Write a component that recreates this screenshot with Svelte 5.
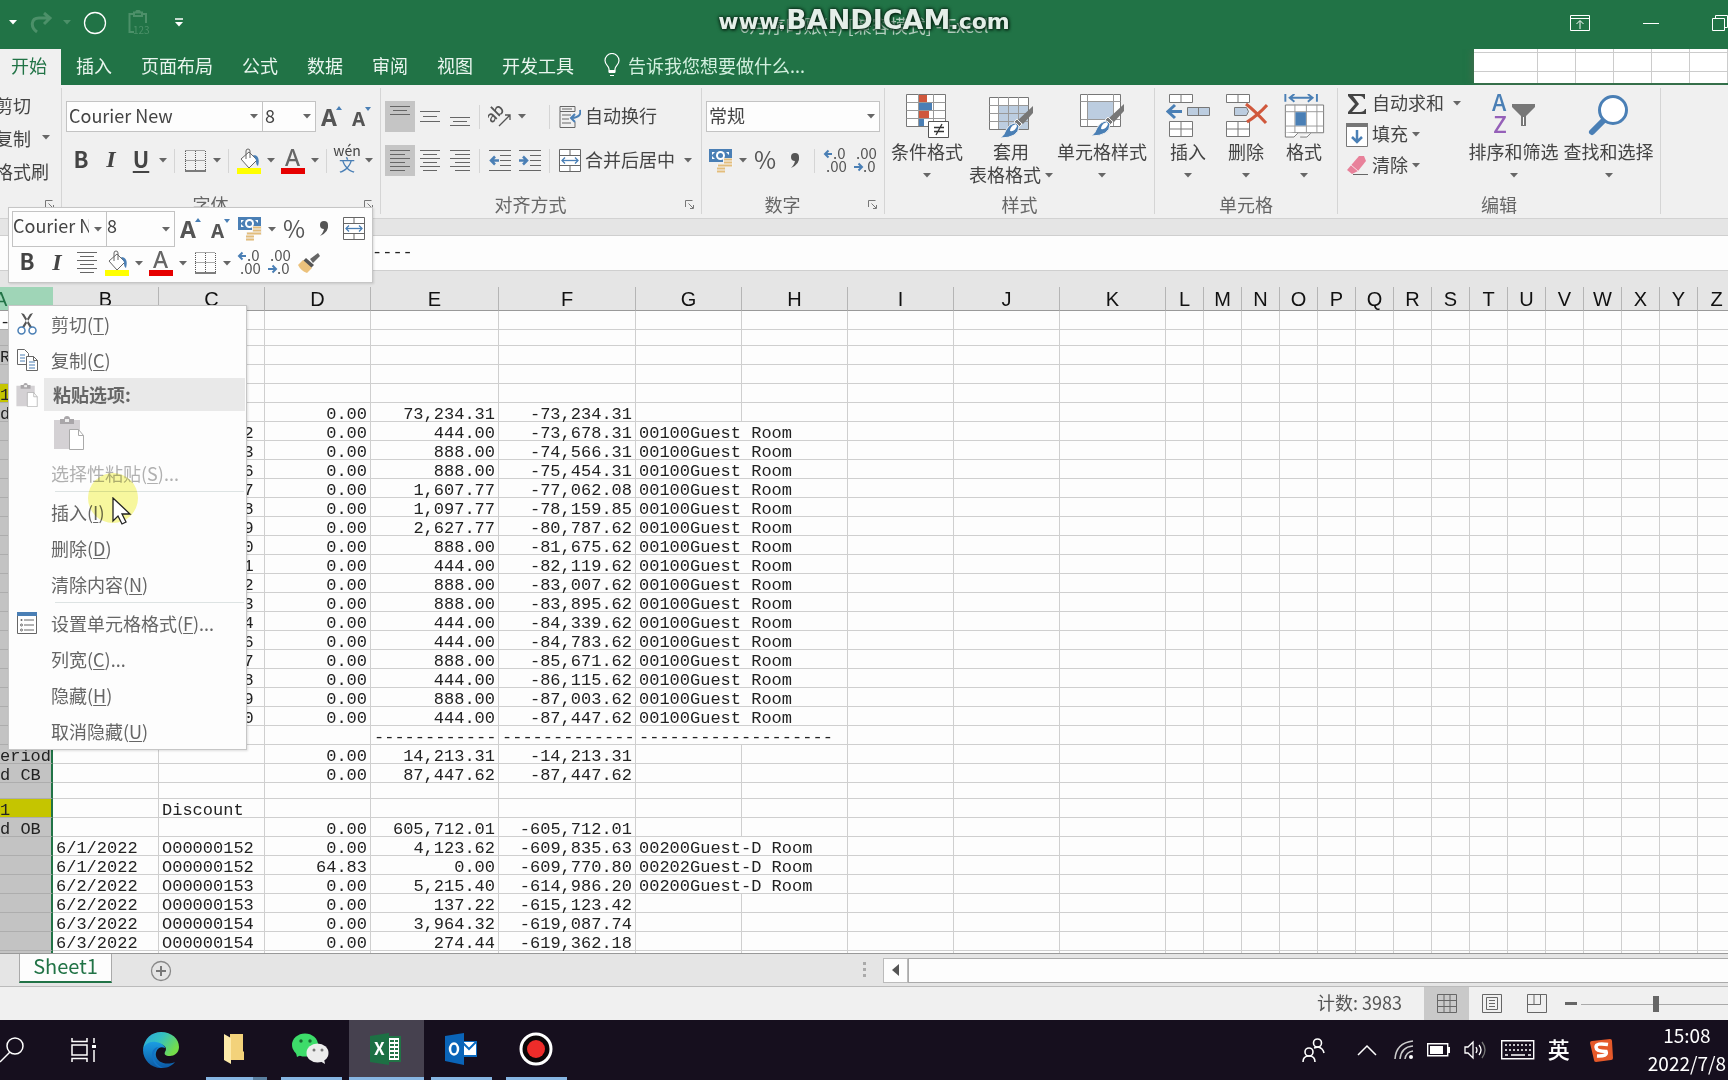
<script>
  const tabs = ['开始', '插入', '页面布局', '公式', '数据', '审阅', '视图', '开发工具'];

  const columns = [
    ['A', 53], ['B', 106], ['C', 106], ['D', 106], ['E', 128], ['F', 137], ['G', 106], ['H', 106],
    ['I', 106], ['J', 106], ['K', 106],
    ...'LMNOPQRSTUVWXYZ'.split('').map((l) => [l, 38])
  ];
  const restCount = columns.length - 8;

  const room = '00100Guest Room';
  const blank = (a = '', extra = {}) => ({ a, b: '', c: '', d: '', e: '', f: '', g: '', ...extra });
  const line = (c, e, f) => ({ a: '', b: '', c: 'O00000' + c, d: '0.00', e, f, g: room });
  const rows = [
    blank('-', { active: true }),
    blank('', { short: true }),
    blank('R'),
    blank(),
    blank('1', { mark: true }),
    { a: 'd', b: '', c: '', d: '0.00', e: '73,234.31', f: '-73,234.31', g: '' },
    line(152, '444.00', '-73,678.31'),
    line(153, '888.00', '-74,566.31'),
    line(156, '888.00', '-75,454.31'),
    line(157, '1,607.77', '-77,062.08'),
    line(158, '1,097.77', '-78,159.85'),
    line(159, '2,627.77', '-80,787.62'),
    line(160, '888.00', '-81,675.62'),
    line(161, '444.00', '-82,119.62'),
    line(162, '888.00', '-83,007.62'),
    line(163, '888.00', '-83,895.62'),
    line(164, '444.00', '-84,339.62'),
    line(166, '444.00', '-84,783.62'),
    line(167, '888.00', '-85,671.62'),
    line(168, '444.00', '-86,115.62'),
    line(169, '888.00', '-87,003.62'),
    line(170, '444.00', '-87,447.62'),
    { a: '', b: '', c: '', d: '', e: '-------------', f: '--------------', g: '-------------------', rule: true },
    { a: 'eriod', b: '', c: '', d: '0.00', e: '14,213.31', f: '-14,213.31', g: '' },
    { a: 'd CB', b: '', c: '', d: '0.00', e: '87,447.62', f: '-87,447.62', g: '' },
    blank('', { short: true }),
    blank('1', { mark: true, c: 'Discount' }),
    { a: 'd OB', b: '', c: '', d: '0.00', e: '605,712.01', f: '-605,712.01', g: '' },
    { a: '', b: '6/1/2022', c: 'O00000152', d: '0.00', e: '4,123.62', f: '-609,835.63', g: '00200Guest-D Room' },
    { a: '', b: '6/1/2022', c: 'O00000152', d: '64.83', e: '0.00', f: '-609,770.80', g: '00202Guest-D Room' },
    { a: '', b: '6/2/2022', c: 'O00000153', d: '0.00', e: '5,215.40', f: '-614,986.20', g: '00200Guest-D Room' },
    { a: '', b: '6/2/2022', c: 'O00000153', d: '0.00', e: '137.22', f: '-615,123.42', g: '' },
    { a: '', b: '6/3/2022', c: 'O00000154', d: '0.00', e: '3,964.32', f: '-619,087.74', g: '' },
    { a: '', b: '6/3/2022', c: 'O00000154', d: '0.00', e: '274.44', f: '-619,362.18', g: '' },
    blank(), blank(), blank(), blank()
  ];

  const menuTop = [
    { icon: 'cut', text: '剪切', key: 'T' },
    { icon: 'copy', text: '复制', key: 'C' }
  ];
  const menuEdit = [
    { text: '插入', key: 'I' },
    { text: '删除', key: 'D' },
    { text: '清除内容', key: 'N' }
  ];
  const menuFormat = [
    { icon: 'format', text: '设置单元格格式', key: 'F', more: '...' },
    { text: '列宽', key: 'C', more: '...' },
    { text: '隐藏', key: 'H' },
    { text: '取消隐藏', key: 'U' }
  ];
  let zoom = $state(50);
</script>

{#snippet caret()}
  <svg class="caret" width="8" height="5" viewBox="0 0 8 5" aria-hidden="true"><path d="M0 0h8L4 4.500z" fill="currentColor" /></svg>
{/snippet}

{#snippet drop(label)}
  <button class="drop" aria-label={label}>{@render caret()}</button>
{/snippet}

{#snippet sep()}<span class="sep"></span>{/snippet}

{#snippet lines(ys, center, right)}
  <svg width="20" height="24" viewBox="0 0 20 24" aria-hidden="true">
    {#each ys as y, i}
      <path d={i % 2 === 0 ? `M0 ${y}h20` : center ? `M3 ${y}h14` : right ? `M5 ${y}h15` : `M0 ${y}h15`} stroke="#666" fill="none" />
    {/each}
  </svg>
{/snippet}

{#snippet grow(down)}
  <svg width="24" height="26" viewBox="0 0 24 26" aria-hidden="true">
    {#if down}
      <text x="3" y="22" class="glyph" font-size="19">A</text><path d="M16 3h6l-3 4z" fill="#4a7fb5" />
    {:else}
      <text x="2" y="22" class="glyph" font-size="23">A</text><path d="M17 6h6l-3-4z" fill="#4a7fb5" />
    {/if}
  </svg>
{/snippet}

{#snippet bucket()}
  <svg width="26" height="26" viewBox="0 0 26 26" aria-hidden="true">
    <path d="M5 11L13 4l8 8-8 8z" fill="#fff" stroke="#666" /><path d="M10 11V3q0-2 2-2t2 2v7" fill="none" stroke="#666" />
    <path d="M17 7c5 0 7 4 5 11-2-1-2-4-2-6z" fill="#4a7fb5" /><rect x="1" y="20" width="24" height="6" fill="#ff0" />
  </svg>
{/snippet}

{#snippet fontColor()}
  <svg width="26" height="26" viewBox="0 0 26 26" aria-hidden="true">
    <text x="5" y="18" class="glyph mid" font-size="23">A</text><rect x="1" y="20" width="24" height="6" fill="#e60000" />
  </svg>
{/snippet}

{#snippet border()}
  <svg width="21" height="22" viewBox="0 0 21 22" aria-hidden="true">
    <path d="M.5.500h20M.5 10.500h20M.5 1v20M10.500 1v20M20.500 1v20" stroke="#555" stroke-dasharray="1 1" /><path d="M0 21h21" stroke="#555" stroke-width="1.500" />
  </svg>
{/snippet}

{#snippet money()}
  <svg width="24" height="24" viewBox="0 0 24 24" aria-hidden="true">
    <path d="M0 0h23v13H0z" fill="#4a7fb5" /><path d="M3 3h3L3 6zM20 3h-3l3 3zM3 10h3L3 7z" fill="#fff" /><circle cx="11.500" cy="6.500" r="4.500" fill="#fff" /><circle cx="11.500" cy="6.500" r="2.500" fill="#4a7fb5" />
    <path d="M14 9h10v9h-9v6H8v-9h6z" fill="#f4f4f4" />
    <path d="M15 10.500h8M15 13.500h8M15 16.500h8M9 16.500h6M8 19.500h8M8 22.500h8" stroke="#e3bd7c" stroke-width="2" fill="none" />
  </svg>
{/snippet}

{#snippet merge()}
  <svg width="22" height="24" viewBox="0 0 22 24" aria-hidden="true">
    <path d="M.5.500h21v22H.5zM.5 6.500h21M.5 16.500h21M11 1v5M11 17v5" fill="#fff" stroke="#666" />
    <path d="M3 11.500h16" stroke="#4a7fb5" stroke-width="1.300" /><path d="M6 8.500l-3 3 3 3M16 8.500l3 3-3 3" fill="none" stroke="#4a7fb5" stroke-width="1.300" />
  </svg>
{/snippet}

{#snippet decimal(more)}
  <svg width="24" height="26" viewBox="0 0 24 26" aria-hidden="true">
    {#if more}
      <text x="10" y="11" class="num">.0</text><text x="3" y="24" class="num">.00</text>
      <path d="M9 6H2M5.500 2.500L2 6l3.500 3.500" stroke="#4a7fb5" stroke-width="2" fill="none" />
    {:else}
      <text x="3" y="11" class="num">.00</text><text x="10" y="24" class="num">.0</text>
      <path d="M1 19h7M5.500 15.500L9 19l-3.500 3.500" stroke="#4a7fb5" stroke-width="2" fill="none" />
    {/if}
  </svg>
{/snippet}

{#snippet comma()}
  <svg width="12" height="18" viewBox="0 0 12 18" aria-hidden="true"><circle cx="6" cy="5" r="4" fill="#555" /><path d="M6 5h4q1 7-8 11 4-4 4-8z" fill="#555" /></svg>
{/snippet}

{#snippet brush()}
  <path d="M45 12v7l-10 11-5-4z" fill="#777" /><path d="M34 30l-5-5-3 3 5 5z" fill="#777" stroke="#f0f0f0" />
  <path d="M31 32q0 12-19 12 4-2 6-8 4-7 10-7z" fill="#4a7fb5" stroke="#f0f0f0" /><path d="M29 32q-2 6-7 5 0-5 6-7z" fill="#fff" />
{/snippet}

{#snippet paste(size)}
  <svg width={size} height={size} viewBox="0 0 32 34" aria-hidden="true">
    <path d="M1 4h26v10h-4v19H1z" fill="#d4d1d4" /><path d="M7 8V3h4q0-3 3-3t3 3h4v5z" fill="#a9a6a9" /><rect x="12" y="3" width="4" height="3" fill="#eee" />
    <path d="M16.500 13.500h9l5 6v14h-14z" fill="#fff" stroke="#aaa" /><path d="M25.500 13.500v6h5" fill="none" stroke="#aaa" />
  </svg>
{/snippet}

{#snippet launcher(label)}
  <button class="launcher" aria-label={label}>
    <svg width="10" height="10" viewBox="0 0 10 10" aria-hidden="true"><path d="M.5 7V.500h7M3.500 3.500L8 8M8.500 5v3.500H5" fill="none" stroke="#777" /></svg>
  </button>
{/snippet}

{#snippet foot(label)}
  <div class="foot"><span>{label}</span>{@render launcher(label + '设置')}</div>
{/snippet}

{#snippet menuItem(item)}
  <li role="none">
    <button class="item" role="menuitem">
      <span class="mi">
        {#if item.icon === 'cut'}
          <svg width="20" height="22" viewBox="0 0 20 22"><path d="M4 0l3 1 8 13-2 1zM16 0l-3 1-8 13 2 1z" fill="#555" /><circle cx="4.500" cy="17.500" r="3.500" fill="#fff" stroke="#4a7fb5" stroke-width="1.500" /><circle cx="15.500" cy="17.500" r="3.500" fill="#fff" stroke="#4a7fb5" stroke-width="1.500" /></svg>
        {:else if item.icon === 'copy'}
          <svg width="21" height="22" viewBox="0 0 21 22"><path d="M.5.500h7l4 4v11H.5z" fill="#fff" stroke="#666" /><path d="M3 6h5M3 9h5M3 12h5" stroke="#4a7fb5" /><path d="M9.500 7.500h7l4 4v10h-11z" fill="#fff" stroke="#666" /><path d="M16.500 7.500v4h4" fill="none" stroke="#666" /><path d="M12 13h6M12 16h6M12 19h6" stroke="#4a7fb5" /></svg>
        {:else if item.icon === 'format'}
          <svg width="20" height="22" viewBox="0 0 20 22"><path d="M.5.500h19v21H.5z" fill="#fff" stroke="#666" /><path d="M0 0h20v4H0z" fill="#4a7fb5" /><path d="M7 8h10M7 13h10M7 18h10" stroke="#666" /><circle cx="4.500" cy="8" r="1" fill="#666" /><circle cx="4.500" cy="13" r="1" fill="none" stroke="#666" /><circle cx="4.500" cy="18" r="1" fill="none" stroke="#666" /></svg>
        {/if}
      </span>
      <span>{item.text}(<u>{item.key}</u>){item.more ?? ''}</span>
    </button>
  </li>
{/snippet}

<div class="app">
  <header class="titlebar">
    <div class="quick">
      <button class="drop" aria-label="撤消">{@render caret()}</button>
      <button class="dim redo" aria-label="恢复"><svg width="24" height="22" viewBox="0 0 24 22"><path d="M7 20C0 15 1 6 9 6h9M14 1l6 5-6 6" fill="none" stroke="currentColor" stroke-width="3" /></svg></button>
      <button class="drop dim" aria-label="恢复列表">{@render caret()}</button>
      <button class="circle" aria-label="圆形"><svg width="24" height="24" viewBox="0 0 24 24"><circle cx="12" cy="12" r="10.500" fill="none" stroke="#fff" stroke-width="1.300" /></svg></button>
      <button class="dim pastenum" aria-label="粘贴数值"><svg width="24" height="25" viewBox="0 0 24 25"><path d="M7 22H2.500V4H7M15 4h4v9M7 2.500h8V6H7zM9 2q2-3 4 0" fill="none" stroke="currentColor" stroke-width="2" /><text x="6" y="24" font-size="10" fill="currentColor">123</text></svg></button>
      <button class="custom" aria-label="自定义快速访问工具栏"><svg width="8" height="9" viewBox="0 0 8 9"><path d="M0 1h8" stroke="#fff" stroke-width="1.500" /><path d="M0 4h8L4 8.500z" fill="#fff" /></svg></button>
    </div>
    <h1>6月序时账(1) [兼容模式] - Excel</h1>
    <div class="winctl">
      <button aria-label="功能区显示选项"><svg width="20" height="16" viewBox="0 0 20 16"><path d="M.5.500h19v15H.5zM.5 3.500h19M10 14V6M6.500 9L10 5.500 13.500 9" fill="none" stroke="#fff" /></svg></button>
      <button aria-label="最小化"><svg width="16" height="16" viewBox="0 0 16 16"><path d="M0 8.500h16" stroke="#fff" /></svg></button>
      <button aria-label="还原"><svg width="16" height="16" viewBox="0 0 16 16"><path d="M.5 3.500h12v12H.5zM3.500 3V.500h12v12H13" fill="none" stroke="#fff" /></svg></button>
    </div>
    <div class="watermark"><small>www.</small>BANDICAM<small>.com</small></div>
  </header>

  <nav class="tabs">
    {#each tabs as tab, i}
      <button class="tab" class:on={i === 0}>{tab}</button>
    {/each}
    <button class="tell">
      <svg width="16" height="24" viewBox="0 0 16 24"><path d="M5 19v-3C5 13 1 12 1 7.500a7 7 0 0 1 14 0C15 12 11 13 11 16v3z" fill="none" stroke="#fff" stroke-width="1.200" /><path d="M5 17h6v3H5zM6 22h4v1H6z" fill="#fff" /></svg>
      告诉我您想要做什么...
    </button>
    <div class="ghost"></div>
  </nav>

  <section class="ribbon">
    <div class="group clip">
      <div class="stack">
        <button class="tool">剪切</button>
        <div class="pair"><button class="tool">复制</button>{@render drop('复制选项')}</div>
        <button class="tool">格式刷</button>
      </div>
      <div class="foot"><span></span>{@render launcher('剪贴板设置')}</div>
    </div>

    <div class="group font">
      <div class="line">
        <label class="combo face"><select aria-label="字体"><option>Courier New</option></select>{@render caret()}</label>
        <label class="combo size"><select aria-label="字号"><option>8</option></select>{@render caret()}</label>
        <button class="btn" aria-label="增大字号">{@render grow(false)}</button>
        <button class="btn" aria-label="减小字号">{@render grow(true)}</button>
      </div>
      <div class="line">
        <button class="btn b">B</button><button class="btn i">I</button><button class="btn u">U</button>{@render drop('下划线')}
        {@render sep()}
        <button class="btn" aria-label="边框">{@render border()}</button>{@render drop('边框选项')}
        {@render sep()}
        <button class="btn" aria-label="填充颜色">{@render bucket()}</button>{@render drop('填充颜色选项')}
        <button class="btn" aria-label="字体颜色">{@render fontColor()}</button>{@render drop('字体颜色选项')}
        {@render sep()}
        <button class="btn wen"><span>wén</span><span>文</span></button>{@render drop('拼音选项')}
      </div>
      {@render foot('字体')}
    </div>

    <div class="group align">
      <div class="line">
        <button class="btn on" aria-label="顶端对齐">{@render lines([1.5, 5.5, 9.5], true)}</button>
        <button class="btn" aria-label="垂直居中">{@render lines([6.5, 11.5, 16.5], true)}</button>
        <button class="btn" aria-label="底端对齐">{@render lines([12.5, 16.5, 20.5], true)}</button>
        {@render sep()}
        <div class="orient">
          <button class="btn" aria-label="方向"><svg width="24" height="24" viewBox="0 0 24 24"><text x="0" y="14" font-size="16" font-weight="500" fill="#555" transform="rotate(-45 8 12)">ab</text><path d="M11 21L22 10M17 10h5v5" fill="none" stroke="#555" stroke-width="1.300" /></svg></button>{@render drop('方向选项')}
        </div>
        {@render sep()}
        <button class="tool wide"><svg width="22" height="24" viewBox="0 0 22 24"><path d="M1 1.500h15v5H1zM1 22.500v-16M16 17v5.500H1M3 4h10M3 10h9M3 14h7M3 18h9" fill="none" stroke="#666" /><path d="M21 5q2 7-8 8M16 9l-4 4 4 4" fill="none" stroke="#4a7fb5" stroke-width="2" /></svg><span>自动换行</span></button>
      </div>
      <div class="line">
        <button class="btn on" aria-label="左对齐">{@render lines([1.5, 5.5, 9.5, 13.5, 17.5, 21.5])}</button>
        <button class="btn" aria-label="居中">{@render lines([1.5, 5.5, 9.5, 13.5, 17.5, 21.5], true)}</button>
        <button class="btn" aria-label="右对齐">{@render lines([1.5, 5.5, 9.5, 13.5, 17.5, 21.5], false, true)}</button>
        {@render sep()}
        <div class="orient">
          <button class="btn" aria-label="减少缩进量"><svg width="22" height="24" viewBox="0 0 22 24"><path d="M0 1.500h22M11 6.500h11M11 11.500h11M11 16.500h11M0 21.500h22" stroke="#666" /><path d="M10 11.500H2M6 7.500l-4 4 4 4" fill="none" stroke="#4a7fb5" stroke-width="2.500" /></svg></button>
          <button class="btn" aria-label="增加缩进量"><svg width="22" height="24" viewBox="0 0 22 24"><path d="M0 1.500h22M11 6.500h11M11 11.500h11M11 16.500h11M0 21.500h22" stroke="#666" /><path d="M0 11.500h8M4 7.500l4 4-4 4" fill="none" stroke="#4a7fb5" stroke-width="2.500" /></svg></button>
        </div>
        {@render sep()}
        <button class="tool wide">{@render merge()}<span>合并后居中</span></button>{@render drop('合并选项')}
      </div>
      {@render foot('对齐方式')}
    </div>

    <div class="group number">
      <div class="line">
        <label class="combo fmt"><select aria-label="数字格式"><option>常规</option></select>{@render caret()}</label>
      </div>
      <div class="line">
        <button class="btn" aria-label="会计数字格式">{@render money()}</button>{@render drop('会计格式选项')}
        <button class="btn pct">%</button>
        <button class="btn" aria-label="千位分隔样式">{@render comma()}</button>
        {@render sep()}
        <button class="btn" aria-label="增加小数位数">{@render decimal(true)}</button>
        <button class="btn" aria-label="减少小数位数">{@render decimal(false)}</button>
      </div>
      {@render foot('数字')}
    </div>

    <div class="group styles">
      <div class="bigs">
        <button class="big">
          <svg width="44" height="44" viewBox="0 0 44 44"><path d="M1.500.500h39v32h-39z" fill="#fff" stroke="#777" /><path d="M1.500 8.500h39M1.500 16.500h39M1.500 24.500h39M13.500 0v32M28.500 0v32" stroke="#999" /><path d="M14 1h8v7h-8zM14 17h10v7H14z" fill="#d0583c" /><path d="M14 9h13v7H14zM14 25h5v7h-5z" fill="#4a7fb5" /><path d="M23.500 27.500h20v16h-20z" fill="#fff" stroke="#555" /><path d="M29 33.500h10M29 37.500h10M37 30l-6 11" stroke="#333" stroke-width="1.300" /></svg>
          <span>条件格式</span><span>{@render caret()}</span>
        </button>
        <button class="big">
          <svg width="46" height="44" viewBox="0 0 46 44"><path d="M1.500 3.500h39v32h-39z" fill="#fff" stroke="#777" /><path d="M11 12h29v23H11z" fill="#bccde0" /><path d="M1.500 11.500h39M1.500 19.500h39M1.500 27.500h39M10.500 3v32M20.500 3v32M30.500 3v32" stroke="#999" />{@render brush()}</svg>
          <span>套用</span><span>表格格式 {@render caret()}</span>
        </button>
        <button class="big">
          <svg width="46" height="44" viewBox="0 0 46 44"><path d="M1.500.500h40v32h-40z" fill="#fff" stroke="#777" /><path d="M9 8h25v17H9z" fill="#bccde0" /><path d="M1.500 7.500h40M1.500 25.500h40M8.500 0v32M34.500 0v32" stroke="#999" /><g transform="translate(0 -2)">{@render brush()}</g></svg>
          <span>单元格样式</span><span>{@render caret()}</span>
        </button>
      </div>
      <div class="foot"><span>样式</span></div>
    </div>

    <div class="group cells">
      <div class="bigs">
        <button class="big">
          <svg width="44" height="44" viewBox="0 0 44 44"><path d="M3.500.500h23v8h-23zM15 .5v8M3.500 27.500h23v15h-23zM3.500 35h23M15 28v15" fill="#fff" stroke="#777" /><path d="M21.500 13.500h22v8h-22zM32.500 13.500v8" fill="#bccde0" stroke="#777" /><path d="M16 17.500H3M9 11l-7 6.500L9 24" fill="none" stroke="#4a7fb5" stroke-width="3" /></svg>
          <span>插入</span><span>{@render caret()}</span>
        </button>
        <button class="big">
          <svg width="44" height="44" viewBox="0 0 44 44"><path d="M2.500.500h23v8h-23zM14 .5v8M2.500 27.500h23v15h-23zM2.500 35h23M14 28v15" fill="#fff" stroke="#777" /><path d="M10.500 13.500h12l2 4-2 4h-12z" fill="#bccde0" stroke="#777" /><path d="M23 28q11-7 20-17M22 10q9 7 20 19" fill="none" stroke="#d0583c" stroke-width="3" /></svg>
          <span>删除</span><span>{@render caret()}</span>
        </button>
        <button class="big">
          <svg width="44" height="46" viewBox="0 0 44 46"><path d="M2.500 0v8M35.500 0v8M7 4h24M12 0L7 4l5 4M26 0l5 4-5 4" fill="none" stroke="#4a7fb5" stroke-width="2" /><path d="M2.500 11.500h40v29h-40z" fill="#fff" stroke="#777" /><path d="M2.500 18.500h40M2.500 33.500h40M12.500 11v29M24.500 11v29M35.500 11v29" stroke="#999" /><path d="M13 19h11v14H13z" fill="#4a7fb5" /><path d="M2.500 40v5h9l4-4M18 45h7l4-4" fill="#fff" stroke="#777" /></svg>
          <span>格式</span><span>{@render caret()}</span>
        </button>
      </div>
      <div class="foot"><span>单元格</span></div>
    </div>

    <div class="group edit">
      <div class="bigs">
        <div class="stack">
          <div class="pair"><button class="tool wide"><svg width="22" height="22" viewBox="0 0 22 22"><path d="M2 1h17v5h-1q-1-3-4-3H7l6 8-7 8h8q4 0 5-3h1v5H2v-2l7-8-7-8z" fill="#444" /></svg><span>自动求和</span></button>{@render drop('自动求和选项')}</div>
          <div class="pair tight"><button class="tool wide"><svg width="22" height="24" viewBox="0 0 22 24"><path d="M.5.500h21v23H.5z" fill="#fff" stroke="#777" /><path d="M0 0h22v4H0z" fill="#777" /><path d="M11 7v12M6 14l5 5 5-5" fill="none" stroke="#4a7fb5" stroke-width="2.500" /></svg><span>填充</span></button>{@render drop('填充选项')}</div>
          <div class="pair tight"><button class="tool wide"><svg width="22" height="22" viewBox="0 0 22 22"><path d="M13 1h5l2 5-8 10-6 3-5-4z" fill="#e8819a" /><path d="M5 10l7 6" stroke="#f8dbe2" /><path d="M7 19.500h15" stroke="#666" /></svg><span>清除</span></button>{@render drop('清除选项')}</div>
        </div>
        <button class="big">
          <svg width="44" height="44" viewBox="0 0 44 44"><text x="0" y="17" font-size="23" font-weight="500" fill="#4a7fb5">A</text><text x="1" y="39" font-size="23" font-weight="500" fill="#9560b8">Z</text><path d="M20 10h23v3l-9 9v10h-5V22l-9-9z" fill="#777" /><path d="M31 23h1v8h-1z" fill="#fff" /></svg>
          <span>排序和筛选</span><span>{@render caret()}</span>
        </button>
        <button class="big">
          <svg width="44" height="44" viewBox="0 0 44 44"><path d="M18 25L5 38" stroke="#4a7fb5" stroke-width="6" stroke-linecap="round" /><circle cx="26" cy="16" r="13.500" fill="#fff" stroke="#4a7fb5" stroke-width="3" /></svg>
          <span>查找和选择</span><span>{@render caret()}</span>
        </button>
      </div>
      <div class="foot"><span>编辑</span></div>
    </div>
  </section>

  <div class="formula"><input aria-label="编辑栏" value="----" /></div>

  <main class="sheet">
    <table>
      <colgroup>
        {#each columns as [name, w]}<col style="width: {w}px" />{/each}
      </colgroup>
      <thead>
        <tr>{#each columns as [name], i}<th scope="col" class:sel={i === 0}>{name}</th>{/each}</tr>
      </thead>
      <tbody>
        {#each rows as r}
          <tr class:short={r.short}>
            <td class="a" class:mark={r.mark} class:active={r.active}>{r.a}</td>
            <td>{r.b}</td>
            <td>{r.c}</td>
            <td class="n">{r.d}</td>
            <td class={r.rule ? 'cut' : 'n'}>{r.e}</td>
            <td class={r.rule ? 'cut' : 'n'}>{r.f}</td>
            {#if r.g}
              <td colspan="2">{r.g}</td>
            {:else}
              <td></td><td></td>
            {/if}
            {#each { length: restCount } as _}<td></td>{/each}
          </tr>
        {/each}
      </tbody>
    </table>
  </main>

  <div class="sheetbar">
    <button class="sheettab">Sheet1</button>
    <button class="add" aria-label="新工作表"><svg width="22" height="22" viewBox="0 0 22 22"><circle cx="11" cy="11" r="9.500" fill="none" stroke="#888" stroke-width="1.300" /><path d="M11 6v10M6 11h10" stroke="#777" stroke-width="2" /></svg></button>
    <div class="hscroll">
      <svg width="4" height="16" viewBox="0 0 4 16"><path d="M0 0h3v3H0zM0 6h3v3H0zM0 12h3v3H0z" fill="#aaa" /></svg>
      <button class="left" aria-label="向左滚动"><svg width="7" height="12" viewBox="0 0 7 12"><path d="M7 0v12L0 6z" fill="#555" /></svg></button>
      <div class="track"></div>
    </div>
  </div>

  <footer class="status">
    <span class="count">计数: 3983</span>
    <button class="view on" aria-label="普通"><svg width="20" height="19" viewBox="0 0 20 19"><path d="M.5.500h19v18H.5zM.5 6.500h19M.5 12.500h19M7 0v18M13 0v18" fill="none" stroke="#666" /></svg></button>
    <button class="view" aria-label="页面布局"><svg width="20" height="19" viewBox="0 0 20 19"><path d="M.5.500h19v18H.5zM4.500 3.500h11v12h-11zM7 6.500h6M7 9.500h6M7 12.500h6" fill="none" stroke="#666" /></svg></button>
    <button class="view" aria-label="分页预览"><svg width="20" height="19" viewBox="0 0 20 19"><path d="M.5.500h19v18H.5zM.5 10.500h13V.500M7 0v10" fill="none" stroke="#666" /></svg></button>
    <button class="minus" aria-label="缩小"><svg width="12" height="4" viewBox="0 0 12 4"><path d="M0 0h12v3H0z" fill="#666" /></svg></button>
    <input class="zoom" type="range" aria-label="缩放" bind:value={zoom} />
  </footer>

  <footer class="taskbar">
    <button class="search" aria-label="搜索"><svg width="24" height="26" viewBox="0 0 24 26"><circle cx="15" cy="9" r="8" fill="none" stroke="#fff" stroke-width="1.500" /><path d="M10 15L0 25" stroke="#fff" stroke-width="1.500" /></svg></button>
    <button class="tview" aria-label="任务视图"><svg width="26" height="24" viewBox="0 0 26 24"><path d="M1 0v3.500h15V0M1 24v-3.500h15V24M1 7h15v10H1zM23 0v5M23 12v12" fill="none" stroke="#fff" stroke-width="1.500" /><path d="M21 7h4v3h-4z" fill="#fff" /></svg></button>
    <button class="task" aria-label="Edge">
      <svg width="36" height="36" viewBox="0 0 36 36">
        <defs>
          <linearGradient id="eg" x1="0" y1="0" x2="1" y2="0.500"><stop offset="0" stop-color="#2aa6e0" /><stop offset=".5" stop-color="#35c1c0" /><stop offset="1" stop-color="#74dd4a" /></linearGradient>
          <linearGradient id="eb" x1="0" y1="0" x2="0" y2="1"><stop offset="0" stop-color="#1b9de2" /><stop offset="1" stop-color="#0c59a4" /></linearGradient>
        </defs>
        <path d="M0 18C1 6 9 0 18 0c11 0 18 7 18 15 0 6-5 9-9 9-5 0-6-2-5-4 3-4-1-8-6-8C8 11 2 13 0 18z" fill="url(#eg)" />
        <path d="M0 18C1 12 7 9 13 10c6 1 9 4 9 6-6-3-10 3-9 8 1 6 10 10 19 6-4 5-9 6-14 6C8 36 0 28 0 18z" fill="url(#eb)" />
        <path d="M16 15c-7 4-8 15 4 21-6 0-11-6-11-13 0-5 3-8 7-8z" fill="#1272c4" />
      </svg>
    </button>
    <button class="task run multi" aria-label="文件资源管理器"><svg width="20" height="32" viewBox="0 0 20 32"><path d="M0 1h19v17l1 1v8H6V1z" fill="#f3d27a" /><path d="M0 1l7 4v26l-7-4z" fill="#fdeaa9" /></svg></button>
    <button class="task run" aria-label="微信"><svg width="38" height="32" viewBox="0 0 38 32"><ellipse cx="13" cy="12" rx="13" ry="11.500" fill="#3ddc6a" /><path d="M4 20l1 4 6-3z" fill="#3ddc6a" /><circle cx="9" cy="8" r="1.700" fill="#176b32" /><circle cx="18" cy="8" r="1.700" fill="#176b32" /><ellipse cx="25.500" cy="20" rx="11" ry="9.500" fill="#ececec" /><path d="M28 28l5 3-1-5z" fill="#ececec" /><circle cx="22" cy="17" r="1.500" fill="#777" /><circle cx="30" cy="17" r="1.500" fill="#777" /></svg></button>
    <button class="task run on" aria-label="Excel"><svg width="32" height="32" viewBox="0 0 32 32"><path d="M16 3h15v26H16z" fill="#217346" /><path d="M19 5h10v22H19z" fill="#fff" /><path d="M20 7h4v2h-4zM25 7h3v2h-3zM20 11h4v2h-4zM25 11h3v2h-3zM20 15h4v2h-4zM25 15h3v2h-3zM20 19h4v2h-4zM25 19h3v2h-3zM20 23h4v2h-4zM25 23h3v2h-3z" fill="#217346" /><path d="M0 3l19-3v32L0 29z" fill="#1d7044" /><text x="4" y="22" font-size="17" font-weight="700" fill="#fff">X</text></svg></button>
    <button class="task run" aria-label="Outlook"><svg width="32" height="32" viewBox="0 0 32 32"><path d="M16 8h16v16H16z" fill="#0a6ac0" /><path d="M17 9h14v13H17z" fill="#fff" /><path d="M18 10l6 6 7-7" fill="none" stroke="#0a6ac0" stroke-width="2" /><path d="M0 3l19-3v32L0 28z" fill="#0a64b8" /><ellipse cx="9" cy="16" rx="4" ry="5.500" fill="none" stroke="#fff" stroke-width="2.500" /></svg></button>
    <button class="task run" aria-label="录制"><svg width="34" height="34" viewBox="0 0 34 34"><circle cx="17" cy="17" r="15" fill="#0b0608" stroke="#fff" stroke-width="3" /><circle cx="17" cy="17" r="9" fill="#ee2c2a" /></svg></button>
    <div class="tray">
      <button class="people" aria-label="人脉"><svg width="24" height="24" viewBox="0 0 24 24"><circle cx="16.500" cy="5" r="4" fill="none" stroke="#fff" stroke-width="1.600" /><circle cx="8" cy="14" r="4" fill="none" stroke="#fff" stroke-width="1.600" /><path d="M2 24q0-6 6-6t6 6M13 10l4-1q5 1 6 6" fill="none" stroke="#fff" stroke-width="1.600" /></svg></button>
      <button class="hidden" aria-label="显示隐藏的图标"><svg width="20" height="12" viewBox="0 0 20 12"><path d="M1 11l9-9 9 9" fill="none" stroke="#fff" stroke-width="1.500" /></svg></button>
      <button aria-label="网络"><svg width="20" height="20" viewBox="0 0 20 20"><path d="M1 19Q2 3 19 1M6 19Q7 7 19 6M11 19Q12 12 19 11" fill="none" stroke="#ccc" stroke-width="1.500" /><circle cx="17" cy="17" r="2" fill="#fff" /></svg></button>
      <button aria-label="电池"><svg width="24" height="14" viewBox="0 0 24 14"><path d="M.7.700h20v12H.700z" fill="none" stroke="#fff" stroke-width="1.400" /><path d="M3 3h13v8H3zM21 4h2v6h-2z" fill="#fff" /></svg></button>
      <button aria-label="音量"><svg width="24" height="20" viewBox="0 0 24 20"><path d="M1 7h3l5-5v16l-5-5H1z" fill="none" stroke="#fff" stroke-width="1.300" /><path d="M12 7q2 3 0 6M15 5q4 5 0 10" fill="none" stroke="#fff" stroke-width="1.300" /><path d="M18 2q6 8 0 16" fill="none" stroke="#777" stroke-width="1.300" /></svg></button>
      <button class="kbd" aria-label="触摸键盘"><svg width="34" height="20" viewBox="0 0 34 20"><path d="M.7.700h32v18H.700z" fill="none" stroke="#fff" stroke-width="1.400" /><path d="M4 5h26M4 10h26" stroke="#fff" stroke-width="1.500" stroke-dasharray="2 2" /><path d="M4 15h3M10 15h14M27 15h3" stroke="#fff" stroke-width="1.500" /></svg></button>
      <button class="ime">英</button>
      <button class="sogou" aria-label="搜狗输入法"><svg width="25" height="25" viewBox="0 0 25 25"><path d="M3 3l18-2q2 0 2 2l1 17q0 2-2 2L7 24q-2 0-2-2L1 5q0-2 2-2z" fill="#e5592a" /><path d="M19 6.500Q7 4.500 7 9t10 4.500q2 5-9 4.500" fill="none" stroke="#fff" stroke-width="3.500" /></svg></button>
      <time datetime="2022-07-08T15:08"><span>15:08</span><span>2022/7/8</span></time>
    </div>
  </footer>

  <div class="mini" role="toolbar" aria-label="浮动工具栏">
    <div class="line">
      <label class="combo mface"><select aria-label="字体"><option>Courier New</option></select>{@render caret()}</label>
      <label class="combo msize"><select aria-label="字号"><option>8</option></select>{@render caret()}</label>
      <button class="btn" aria-label="增大字号">{@render grow(false)}</button>
      <button class="btn" aria-label="减小字号">{@render grow(true)}</button>
      <button class="btn" aria-label="会计数字格式">{@render money()}</button>{@render drop('会计格式选项')}
      <button class="btn pct">%</button>
      <button class="btn" aria-label="千位分隔样式">{@render comma()}</button>
      <button class="btn" aria-label="合并后居中">{@render merge()}</button>
    </div>
    <div class="line">
      <button class="btn b">B</button><button class="btn i">I</button>
      <button class="btn" aria-label="居中">{@render lines([1.5, 5.5, 9.5, 13.5, 17.5, 21.5], true)}</button>
      <button class="btn" aria-label="填充颜色">{@render bucket()}</button>{@render drop('填充颜色选项')}
      <button class="btn" aria-label="字体颜色">{@render fontColor()}</button>{@render drop('字体颜色选项')}
      <button class="btn" aria-label="边框">{@render border()}</button>{@render drop('边框选项')}
      <button class="btn" aria-label="增加小数位数">{@render decimal(true)}</button>
      <button class="btn" aria-label="减少小数位数">{@render decimal(false)}</button>
      <button class="btn" aria-label="格式刷"><svg width="24" height="22" viewBox="0 0 24 22"><path d="M13 7l8-6 2 3-7 7z" fill="#666" /><path d="M9 6l8 7-3 3-8-7z" fill="#555" /><path d="M6 8l9 8-5 5q-6-2-9-8z" fill="#ecc27c" /></svg></button>
    </div>
  </div>

  <ul class="menu" role="menu">
    {#each menuTop as item}{@render menuItem(item)}{/each}
    <li class="head" role="presentation"><span class="mi">{@render paste(24)}</span><b>粘贴选项:</b></li>
    <li role="none"><button class="pasteopt" role="menuitem" aria-label="粘贴" disabled>{@render paste(34)}</button></li>
    <li role="none"><button class="item" role="menuitem" disabled><span class="mi"></span><span>选择性粘贴(<u>S</u>)...</span></button></li>
    <li class="rule" role="separator"></li>
    {#each menuEdit as item}{@render menuItem(item)}{/each}
    <li class="rule" role="separator"></li>
    {#each menuFormat as item}{@render menuItem(item)}{/each}
  </ul>

  <div class="halo"></div>
  <svg class="pointer" width="20" height="30" viewBox="0 0 20 30" aria-hidden="true"><path d="M1 1v23l5-5 4 8 4-2-4-8h8z" fill="#fff" stroke="#222" stroke-width="1.300" /></svg>
</div>

<style>
  :global(body) { margin: 0; overflow: hidden; }
  .app {
    position: relative; display: flex; flex-direction: column; height: 100vh; overflow: hidden;
    font-family: "Noto Sans CJK SC", "Noto Sans", sans-serif; font-size: 18px; line-height: 22px; color: #444; background: #e5e5e5;
  }
  .app * { box-sizing: border-box; }
  button { font: inherit; color: inherit; background: none; border: 0; padding: 0; margin: 0; white-space: nowrap; flex: none; }
  svg { display: block; flex: none; }
  .caret { color: #666; }

  .titlebar { position: relative; display: grid; grid-template-columns: 1fr auto 1fr; height: 49px; flex: none; background: #217346; color: #fff; }
  .titlebar h1 { margin: 0; padding-top: 14px; font-size: 18px; line-height: 22px; font-weight: 400; color: #b5d0c0; }
  .quick { display: flex; align-items: center; height: 45px; padding-left: 6px; }
  .quick .caret { color: inherit; }
  .quick .dim { color: #4c9069; }
  .redo { margin-left: 10px; }
  .quick .dim.drop { margin-left: 6px; }
  .circle { margin-left: 9px; }
  .pastenum { margin-left: 20px; }
  .custom { margin-left: 24px; }
  .winctl { display: flex; justify-content: flex-end; align-items: center; height: 45px; gap: 53px; }
  .watermark {
    position: absolute; left: 0; right: 0; top: 5px; text-align: center; font: 700 27px/30px "DejaVu Sans", sans-serif;
    color: #e4eee8; text-shadow: 0 0 3px #0a2a18, 0 0 4px #0a2a18, 1px 1px 3px #0a2a18; pointer-events: none;
  }
  .watermark small { font-size: 22px; }

  .tabs { display: flex; height: 36px; flex: none; background: #217346; color: #e9f5ee; }
  .tab { padding: 0 14px 5px 15px; height: 36px; }
  .tab.on { padding-left: 11px; background: #f0f0f0; color: #217346; }
  .tell { display: flex; align-items: center; gap: 8px; padding: 0 0 5px 16px; color: #d3f0df; }
  .ghost {
    margin-left: auto; width: 254px; height: 34px; box-shadow: 0 0 8px rgba(120, 100, 90, .6);
    background:
      repeating-linear-gradient(90deg, transparent 0 37px, #ccc 37px 38px) 26px 0 / 228px 100% no-repeat,
      linear-gradient(#ccc, #ccc) 0 3px / 100% 1px no-repeat,
      linear-gradient(#ccc, #ccc) 0 22px / 100% 1px no-repeat, #fff;
  }

  .ribbon { display: flex; flex: none; height: 134px; padding: 3px 0 4px; background: #f0f0f0; border-bottom: 1px solid #d2d2d2; }
  .group { display: flex; flex-direction: column; flex: none; border-right: 1px solid #d5d5d5; }
  .foot { display: flex; align-items: center; height: 22px; margin-top: auto; margin-bottom: -2px; color: #666; line-height: 20px; }
  .foot span { flex: 1; text-align: center; padding-bottom: 3px; }
  .launcher { width: 25px; height: 12px; padding-left: 9px; }
  .clip { width: 62px; overflow: hidden; }
  .clip .tool { margin-left: -5px; }
  .clip .pair { gap: 8px; }
  .stack { display: flex; flex-direction: column; align-items: flex-start; }
  .clip .stack > * { height: 33px; }
  .edit .stack > * { height: 31px; }
  .font { width: 319px; }
  .align { width: 321px; }
  .number { width: 183px; }
  .styles { width: 270px; }
  .cells { width: 183px; }
  .edit { width: 323px; }
  .font, .align, .number { padding: 13px 0 0 4px; gap: 13px; }
  .line { display: flex; align-items: center; height: 31px; flex: none; }
  .btn { display: flex; align-items: center; justify-content: center; width: 30px; height: 31px; }
  .btn.on { background: #c5c5c5; }
  .btn.b, .btn.i, .btn.u { font-weight: 700; font-size: 22px; padding-bottom: 6px; }
  .btn.i { font-style: italic; font-family: "Liberation Serif", serif; font-size: 24px; padding-bottom: 3px; }
  .btn.u { text-decoration: underline; text-underline-offset: 3px; }
  .btn.pct { font-size: 24px; color: #555; padding-bottom: 3px; }
  .btn.wen { flex-direction: column; font-size: 14px; line-height: 12px; padding-bottom: 4px; }
  .wen span + span { color: #4a7fb5; font-size: 16px; line-height: 17px; }
  .drop { display: flex; align-items: center; justify-content: center; width: 14px; height: 31px; }
  .sep { width: 1px; height: 24px; margin: 0 5px 0 4px; background: #d5d5d5; flex: none; }
  .orient { display: flex; width: 60px; }
  .combo { display: flex; align-items: center; height: 31px; background: #fdfdfd; border: 1px solid #c3c3c3; flex: none; padding-right: 4px; }
  .combo select { appearance: none; border: 0; background: none; font: inherit; color: inherit; flex: 1; min-width: 0; padding: 0 0 4px 2px; height: 29px; outline: 0; overflow: hidden; }
  .face { width: 197px; margin-right: -1px; }
  .size { width: 54px; }
  .fmt { width: 174px; padding-right: 4px; }
  .tool { display: flex; align-items: center; }
  .tool.wide { gap: 4px; padding-left: 4px; }
  .tool span { padding-bottom: 3px; }
  .pair { display: flex; align-items: center; }
  .align .drop, .edit .drop { margin-left: 6px; }
  .align .orient .drop { margin: 0; }
  .edit .tight .drop { margin-left: 1px; }
  .edit .stack { width: 128px; padding-left: 4px; }
  .bigs { display: flex; }
  .styles .bigs { padding-left: 2px; }
  .cells .bigs { padding-left: 4px; }
  .big { display: flex; flex-direction: column; align-items: center; padding: 6px 4px 0; }
  .styles .big + .big { padding-left: 2px; padding-right: 2px; }
  .big svg:first-child { height: 44px; margin-bottom: 1px; }
  .big span { display: flex; align-items: center; justify-content: center; gap: 4px; height: 23px; }
  .big span .caret { height: 5px; margin: 3px 0 0; }
  .cells .big { width: 58px; }
  .edit .big { width: 95px; }
  .glyph { font-weight: 700; fill: #555; font-family: "Noto Sans", sans-serif; }
  .glyph.mid { font-weight: 500; fill: #666; }
  .num { font-size: 15px; fill: #555; }

  .formula { flex: none; margin: 16px 0; height: 36px; background: #fdfdfd; border: solid #cfcfcf; border-width: 1px 0; }
  .formula input { display: block; width: 100%; height: 34px; border: 0; padding: 0 0 0 372px; background: none; outline: 0; font: 17px/34px "Liberation Mono", monospace; color: #222; }

  .sheet { flex: 1; min-height: 0; overflow: hidden; border-bottom: 1px solid #999; background: #fdfdfd; }
  table { width: 1736px; table-layout: fixed; border-collapse: separate; border-spacing: 0; }
  th { height: 24px; padding: 0; border-right: 1px solid #b5b5b5; border-bottom: 1px solid #999; background: #e5e5e5; color: #111; font: 400 20px/22px "Liberation Sans", sans-serif; }
  th.sel { background: #9fd5b7; color: #217346; border-right-color: #9fd5b7; text-align: left; text-indent: -6px; }
  td {
    height: 19px; padding: 6px 3px 0; border-right: 1px solid #cfcfcf; border-bottom: 1px solid #cfcfcf; background: #fdfdfd;
    font: 17px/12px "Liberation Mono", monospace; color: #222; white-space: nowrap;
  }
  .short td { height: 16px; }
  td.n { text-align: right; }
  td.cut { overflow: hidden; }
  td.a { padding-left: 0; padding-right: 0; background: #c3c3c3; border-right: 2px solid #217346; border-bottom-color: #adadad; }
  td.a.active { background: #fff; }
  td.a.mark { background: #c5c500; }

  .sheetbar { display: flex; align-items: flex-start; flex: none; height: 33px; padding-left: 19px; border-bottom: 1px solid #bbb; background: #e5e5e5; }
  .sheettab { width: 93px; height: 29px; padding-bottom: 4px; background: #fdfdfd; border: solid #aaa; border-width: 0 1px; border-bottom: 2px solid #217346; color: #217346; font-size: 20px; line-height: 22px; }
  .add { margin: 6px 0 0 38px; }
  .hscroll { display: flex; align-items: center; margin-left: auto; width: 865px; height: 32px; }
  .sheetbar .hscroll { flex: none; }
  .hscroll .left { display: flex; align-items: center; justify-content: center; width: 25px; height: 25px; margin-left: 16px; border: 1px solid #bbb; background: #fdfdfd; }
  .track { flex: 1; height: 25px; border: 1px solid #aaa; border-right: 0; background: #fdfdfd; }
  .sheetbar .hscroll { width: calc(50% + 11px); }

  .status { display: flex; align-items: center; justify-content: flex-end; flex: none; height: 33px; background: #f0f0f0; color: #555; }
  .count { margin-right: 22px; padding-bottom: 4px; }
  .view { display: flex; align-items: center; justify-content: center; width: 45px; height: 33px; }
  .view.on { background: #c9c9c9; }
  .minus { margin: 0 4px 0 6px; }
  .zoom { appearance: none; width: 150px; height: 20px; margin: 0 -3px 0 0; background: linear-gradient(#aaa, #aaa) 0 10px / 100% 1px no-repeat; flex: none; }
  .zoom::-webkit-slider-thumb { appearance: none; width: 6px; height: 16px; background: #666; }

  .taskbar { display: flex; align-items: center; flex: none; height: 60px; background: #160f1e; color: #fff; }
  .taskbar button { display: flex; align-items: center; justify-content: center; height: 60px; }
  .taskbar .search { width: 48px; padding-right: 24px; }
  .taskbar .tview { width: 76px; padding-right: 4px; }
  .taskbar .task { width: 75px; border-top: 3px solid transparent; padding: 0 1px 3px 0; }
  .run { background: linear-gradient(#86b5e2, #86b5e2) center bottom / 61px 3px no-repeat; background-origin: border-box; }
  .taskbar .task.run { padding-bottom: 6px; }
  .taskbar .task.multi { padding-right: 6px; }
  .run.multi { background: linear-gradient(90deg, #86b5e2 47px, #5a7f9f 47px) center bottom / 61px 3px no-repeat; }
  .run.on { background: linear-gradient(#86b5e2, #86b5e2) center bottom / 100% 3px no-repeat, #46414f; background-clip: border-box; }
  .tray { display: flex; align-items: center; margin-left: auto; gap: 13px; padding-right: 2px; }
  .tray .people { margin-right: 19px; }
  .tray .hidden { margin-right: 4px; }
  .tray .ime { font-size: 22px; font-weight: 500; padding-bottom: 4px; }
  .tray .sogou { margin-left: 6px; }
  time { display: flex; flex-direction: column; align-items: center; margin-left: 21px; font-size: 19px; line-height: 28px; padding-bottom: 3px; }

  .mini { position: absolute; left: 8px; top: 207px; display: flex; flex-direction: column; padding: 3px; border: 1px solid #c6c6c6; background: #fdfdfd; width: 365px; height: 76px; box-shadow: 1px 1px 2px rgba(0, 0, 0, .12); }
  .mini .line:first-child { height: 36px; }
  .mini .line:last-child { height: 32px; }
  .mini .combo { height: 36px; }
  .mface { width: 95px; margin-right: -1px; }
  .mini .combo select { height: 34px; padding: 0 0 8px 0; }
  .mini .mface select { margin-right: 5px; }
  .msize { width: 69px; }
  .mini .line:first-child .btn:last-child { width: 30px; }

  .menu { position: absolute; left: 8px; top: 305px; width: 239px; margin: 0; padding: 0; list-style: none; border: 1px solid #c6c6c6; background: #fdfdfd; color: #666; box-shadow: 1px 1px 2px rgba(0, 0, 0, .12); }
  .item { display: flex; align-items: center; width: 100%; height: 36px; text-align: left; }
  .item:disabled { color: #b0b0b0; }
  .mi { display: flex; justify-content: center; width: 36px; margin-right: 6px; flex: none; }
  .menu u { text-underline-offset: 2px; text-decoration-thickness: 1px; }
  .head { display: flex; align-items: center; height: 33px; background: linear-gradient(#e9e9e9, #e9e9e9) 35px 0 / 201px 100% no-repeat; }
  .head b { padding-left: 2px; padding-bottom: 1px; }
  .pasteopt { display: block; height: 44px; padding: 0 0 0 43px; }
  .rule { height: 1px; margin: 0 2px 2px 46px; background: #dde3e3; }

  .halo { position: absolute; left: 88px; top: 473px; width: 50px; height: 50px; border-radius: 50%; background: #f9f99f; mix-blend-mode: multiply; pointer-events: none; }
  .pointer { position: absolute; left: 112px; top: 497px; pointer-events: none; }
</style>
